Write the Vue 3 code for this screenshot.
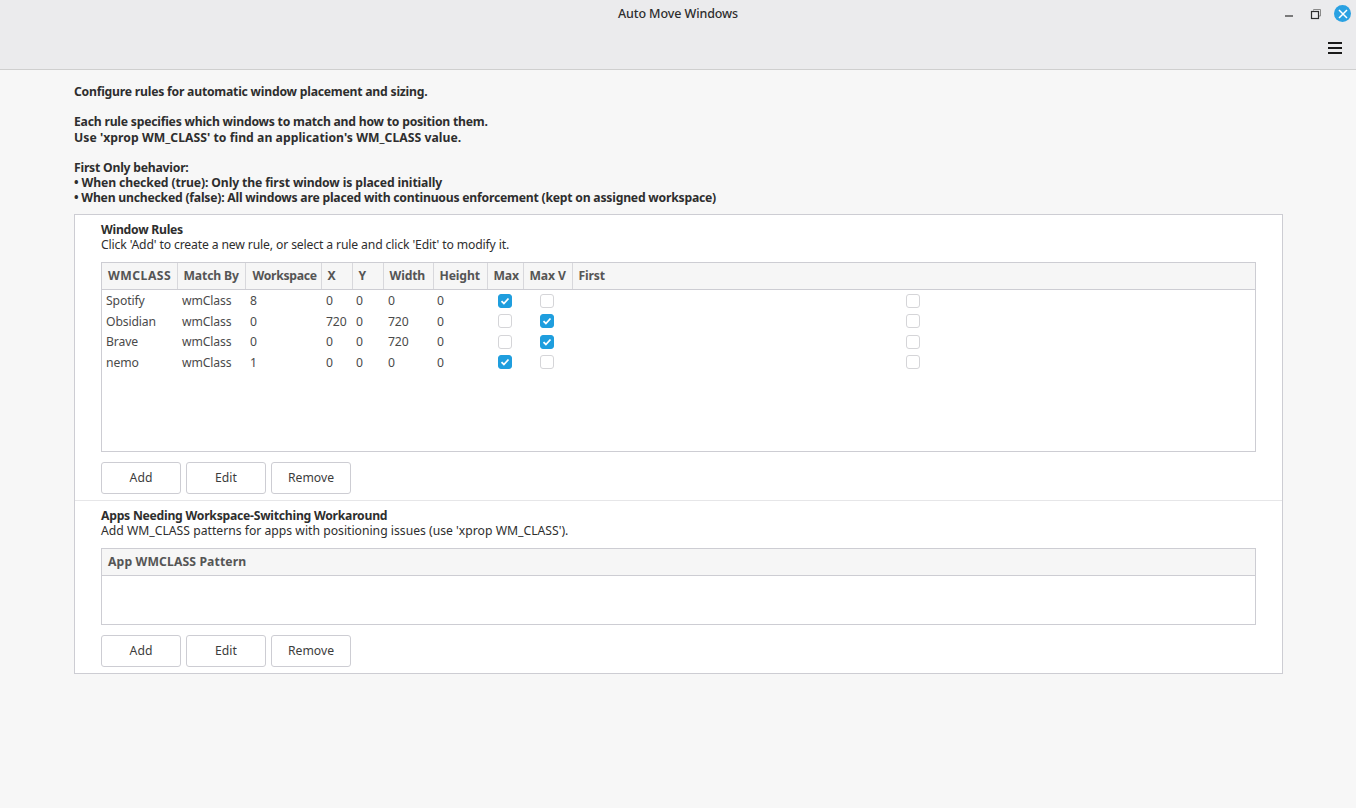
<script setup>
const rules = [
  { wm: 'Spotify', match: 'wmClass', ws: 8, x: 0, y: 0, w: 0, h: 0, max: true, maxV: false, first: false },
  { wm: 'Obsidian', match: 'wmClass', ws: 0, x: 720, y: 0, w: 720, h: 0, max: false, maxV: true, first: false },
  { wm: 'Brave', match: 'wmClass', ws: 0, x: 0, y: 0, w: 720, h: 0, max: false, maxV: true, first: false },
  { wm: 'nemo', match: 'wmClass', ws: 1, x: 0, y: 0, w: 0, h: 0, max: true, maxV: false, first: false },
]
const headers = ['WMCLASS', 'Match By', 'Workspace', 'X', 'Y', 'Width', 'Height', 'Max', 'Max V', 'First']
const actions = ['Add', 'Edit', 'Remove']
</script>

<template>
  <div class="window">
    <header class="titlebar">
      <div class="title">Auto Move Windows</div>
      <div class="controls">
        <svg class="ctl" width="12" height="12" viewBox="0 0 12 12">
          <path d="M2 8h8" stroke="#2e2e2e" stroke-width="1.2" fill="none" />
        </svg>
        <svg class="ctl" width="12" height="12" viewBox="0 0 12 12">
          <path d="M3.5 2.5V1.5h7v6.5H9" stroke="#8a8a8a" stroke-width="1" fill="none" />
          <rect x="1.5" y="3.5" width="7" height="7" stroke="#2e2e2e" stroke-width="1.2" fill="none" />
        </svg>
        <span class="close">
          <svg width="10" height="10" viewBox="0 0 10 10">
            <path d="M1 1l8 8M9 1l-8 8" stroke="#fff" stroke-width="1.5" fill="none" />
          </svg>
        </span>
      </div>
      <div class="menu-row">
        <svg width="14" height="12" viewBox="0 0 14 12">
          <path d="M0 1h14M0 6h14M0 11h14" stroke="#1a1a1a" stroke-width="1.9" fill="none" />
        </svg>
      </div>
    </header>

    <main class="content">
      <div class="intro">
        <p>Configure rules for automatic window placement and sizing.</p>
        <p>Each rule specifies which windows to match and how to position them.<br /><span class="wide">Use 'xprop WM_CLASS' to find an application's WM_CLASS value.</span></p>
        <p>First Only behavior:<br /><span class="mid">• When checked (true): Only the first window is placed initially</span><br />• When unchecked (false): All windows are placed with continuous enforcement (kept on assigned workspace)</p>
      </div>

      <div class="frame">
        <section class="group first-group">
          <h4>Window Rules</h4>
          <div class="hint">Click 'Add' to create a new rule, or select a rule and click 'Edit' to modify it.</div>
          <div class="list rules-list">
            <table>
              <colgroup>
                <col style="width: 75px" />
                <col style="width: 68px" />
                <col style="width: 76px" />
                <col style="width: 31px" />
                <col style="width: 31px" />
                <col style="width: 50px" />
                <col style="width: 54px" />
                <col style="width: 36px" />
                <col style="width: 49px" />
                <col />
              </colgroup>
              <thead>
                <tr>
                  <th v-for="h in headers" :key="h">{{ h }}</th>
                </tr>
              </thead>
              <tbody>
                <tr v-for="r in rules" :key="r.wm">
                  <td>{{ r.wm }}</td>
                  <td>{{ r.match }}</td>
                  <td>{{ r.ws }}</td>
                  <td>{{ r.x }}</td>
                  <td>{{ r.y }}</td>
                  <td>{{ r.w }}</td>
                  <td>{{ r.h }}</td>
                  <td class="chk" v-for="(val, i) in [r.max, r.maxV, r.first]" :key="i">
                    <span class="box" :class="{ on: val }">
                      <svg v-if="val" width="10" height="10" viewBox="0 0 10 10">
                        <path d="M1.5 5.2l2.4 2.3 4.6-5" stroke="#fff" stroke-width="1.8" fill="none" />
                      </svg>
                    </span>
                  </td>
                </tr>
              </tbody>
            </table>
          </div>
          <div class="actions">
            <button v-for="a in actions" :key="a">{{ a }}</button>
          </div>
        </section>

        <section class="group second-group">
          <h4>Apps Needing Workspace-Switching Workaround</h4>
          <div class="hint loose">Add WM_CLASS patterns for apps with positioning issues (use 'xprop WM_CLASS').</div>
          <div class="list apps-list">
            <div class="single-head">App WMCLASS Pattern</div>
          </div>
          <div class="actions">
            <button v-for="a in actions" :key="a">{{ a }}</button>
          </div>
        </section>
      </div>
    </main>
  </div>
</template>

<style>
html, body { margin: 0; background: #f7f7f7; }
</style>

<style scoped>
.window {
  width: 1356px;
  height: 808px;
  overflow: hidden;
  background: #f7f7f7;
  color: #2e2e2e;
  font-family: "Noto Sans", sans-serif;
  font-size: 12.2px;
  letter-spacing: -0.14px;
}
.titlebar {
  height: 69px;
  background: #ebebed;
  border-bottom: 1px solid #cfcfcf;
  position: relative;
}
.title {
  text-align: center;
  padding-top: 5px;
  line-height: 17px;
  font-weight: 500;
  font-size: 12.5px;
  letter-spacing: -0.1px;
}
.controls {
  position: absolute;
  top: 5px;
  right: 5px;
  display: flex;
  align-items: center;
  gap: 15px;
}
.close {
  width: 17px;
  height: 17px;
  margin-left: -3px;
  border-radius: 50%;
  background: #2aa1e2;
  display: flex;
  align-items: center;
  justify-content: center;
}
.menu-row {
  position: absolute;
  top: 42px;
  right: 14px;
  line-height: 0;
}
.content { padding: 14px 73px 0 74px; }
.intro {
  font-weight: 700;
  line-height: 15.2px;
  letter-spacing: -0.22px;
}
.intro p { margin: 0 0 15.2px; }
.intro p:last-child { margin-bottom: 0; }
.wide { letter-spacing: 0.04px; }
.mid { letter-spacing: -0.12px; }
.frame {
  margin-top: 8px;
  background: #fff;
  border: 1px solid #cdcdd3;
  height: 458px;
}
.group { padding: 0 26px; }
.first-group {
  box-sizing: border-box;
  padding-top: 7px;
  height: 286px;
  border-bottom: 1px solid #e6e6e8;
}
.second-group { padding-top: 7px; }
h4 {
  margin: 0;
  font-size: 12.2px;
  font-weight: 700;
  line-height: 15px;
  letter-spacing: -0.25px;
}
.hint { line-height: 15px; }
.hint.loose { letter-spacing: 0; }
.list {
  margin-top: 10px;
  border: 1px solid #cdcdd3;
  background: #fff;
}
.rules-list { height: 188px; }
.apps-list { height: 75px; }
table {
  width: 100%;
  border-collapse: collapse;
  table-layout: fixed;
}
th {
  height: 26px;
  padding: 0 0 0 6px;
  text-align: left;
  background: #f6f6f6;
  color: #555;
  font-weight: 700;
  border-right: 1px solid #d8d8dc;
  border-bottom: 1px solid #cdcdd3;
  white-space: nowrap;
}
th:last-child { border-right: 0; }
th:nth-child(1) { letter-spacing: 0.5px; }
th:nth-child(3) { letter-spacing: -0.3px; padding-left: 7px; }
tbody tr:first-child td { padding-top: 1px; }
td {
  height: 20.5px;
  padding: 0 0 0 4px;
  color: #4a4a4a;
}
td:nth-child(2),
td:nth-child(3),
td:nth-child(4),
td:nth-child(6) { padding-left: 5px; }
.chk { text-align: center; padding: 0; line-height: 0; }
td.chk:nth-child(9),
td.chk:nth-child(10) { padding-right: 1px; }
.box {
  display: inline-flex;
  align-items: center;
  justify-content: center;
  width: 12px;
  height: 12px;
  border: 1px solid #d5d5d8;
  border-radius: 3px;
  background: #fff;
}
.box.on {
  background: #1f9ede;
  border-color: #1f9ede;
}
.single-head {
  height: 26px;
  line-height: 26px;
  padding-left: 6px;
  background: #f6f6f6;
  color: #555;
  font-weight: 700;
  letter-spacing: 0.12px;
  border-bottom: 1px solid #cdcdd3;
}
.actions {
  margin-top: 10px;
  display: flex;
  gap: 5px;
}
button {
  width: 80px;
  height: 32px;
  padding: 0;
  background: #fff;
  border: 1px solid #cdcdd3;
  border-radius: 3px;
  font: inherit;
  letter-spacing: 0;
  color: #3c3c3c;
}
</style>
